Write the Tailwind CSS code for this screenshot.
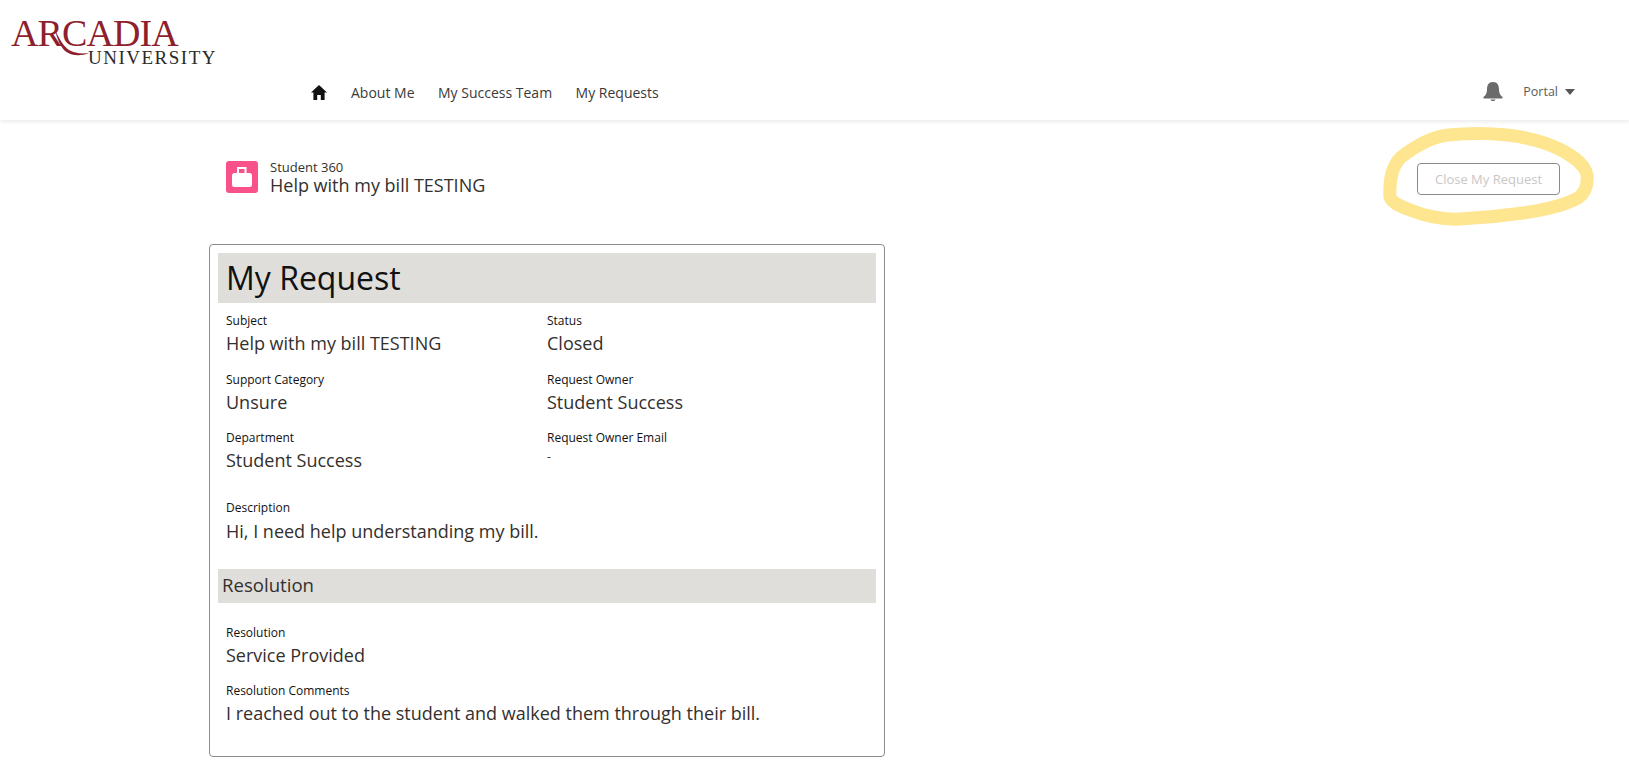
<!DOCTYPE html>
<html lang="en">
<head>
    <meta charset="UTF-8">
    <meta name="viewport" content="width=device-width, initial-scale=1.0">
    <title>My Request</title>
    <script src="https://cdn.jsdelivr.net/npm/@tailwindcss/browser@4"></script>
</head>
<body class="bg-white font-['Open_Sans',sans-serif] text-[#33302e] h-[773px] overflow-hidden relative">

    <!-- header -->
    <header class="h-[120px] bg-white shadow-[0_2px_4px_rgba(0,0,0,0.08)] pl-[11px] pr-[54px] pt-[18px]">
        <div class="relative w-[210px] h-[50px]">
            <span class="absolute left-0 top-0 font-['Liberation_Serif',serif] text-[38px] leading-[30px] tracking-[-0.9px] text-[#8e1f2d]">ARCADIA</span>
            <span class="absolute left-[77px] top-[30px] font-['Liberation_Serif',serif] text-[19px] leading-[20px] tracking-[1.5px] text-[#2a2a2a]">UNIVERSITY</span>
            <svg class="absolute left-[40px] top-[10px]" width="50" height="30" viewBox="0 0 50 30" fill="none"><path d="M4 2 C8 10 12 18 18 22 C23 25 30 26 38 25 C30 28.5 20 28 14 23 C9 18 6 10 4 2Z" fill="#8e1f2d"/></svg>
        </div>
        <div class="flex items-center h-[28px] mt-[10px] pl-[300px]">
            <svg class="w-[16px] h-[15px] mr-[24px]" viewBox="0 0 16 15" fill="#111"><path d="M8 0 L16 7.5 H13.6 V15 H9.8 V10 H6.2 V15 H2.4 V7.5 H0 Z"/></svg>
            <nav class="flex gap-[23.5px] text-[14px] text-[#3a3a3a]">
                <a>About Me</a>
                <a>My Success Team</a>
                <a>My Requests</a>
            </nav>
            <div class="ml-auto flex items-center">
                <svg class="w-[20px] h-[20px] mr-[20px]" viewBox="0 0 20 20" fill="#6b6b6b"><path d="M10 0 C14.5 0 16 3.5 16 7.5 C16 11 17 13 19.5 15 V16.5 H0.5 V15 C3 13 4 11 4 7.5 C4 3.5 5.5 0 10 0Z"/><path d="M7.5 17.5 H12.5 C12 19.5 8 19.5 7.5 17.5Z"/></svg>
                <span class="text-[12.5px] text-[#5c5c5c]">Portal</span>
                <svg class="w-[10px] h-[6px] ml-[7px]" viewBox="0 0 10 6" fill="#555"><path d="M0 0 H10 L5 6Z"/></svg>
            </div>
        </div>
    </header>

    <main class="pl-[209px]">
        <!-- page title -->
        <div class="flex justify-between pl-[17px] pr-[69px] pt-[41px] h-[124px]">
            <div class="flex items-start gap-[12px]">
                <div class="w-[32px] h-[32px] rounded-[3px] bg-[#f9528a]">
                    <svg width="32" height="32" viewBox="0 0 32 32" fill="#fff"><path d="M11 6 H20.5 V12 H18.5 V8 H13 V12 H11Z"/><rect x="6" y="12" width="20" height="14" rx="2.5"/></svg>
                </div>
                <div>
                    <div class="text-[13px] leading-[13px]">Student 360</div>
                    <div class="text-[18px] leading-[22px]">Help with my bill TESTING</div>
                </div>
            </div>
            <button class="self-start mt-[2px] pt-[1px] w-[143px] h-[32px] rounded-[4px] border border-[#8a8a8a] bg-white text-[13px] text-[#c9c7c5]">Close My Request</button>
        </div>

        <!-- request card -->
        <section class="w-[676px] h-[513px] border border-[#8c8c8c] rounded-[4px] p-[8px]">
            <h1 class="h-[50px] bg-[#dfdedb] pl-[8px] text-[32px] leading-[50px] text-[#111]">My Request</h1>
            <div class="grid grid-cols-[321px_1fr] pl-[8px] pt-[9px]">
                <div class="h-[58.5px]"><p class="text-[12px] leading-[18px] text-[#111]">Subject</p><p class="text-[18px] leading-[26px]">Help with my bill TESTING</p></div>
                <div class="h-[58.5px]"><p class="text-[12px] leading-[18px] text-[#111]">Status</p><p class="text-[18px] leading-[26px]">Closed</p></div>
                <div class="h-[58.5px]"><p class="text-[12px] leading-[18px] text-[#111]">Support Category</p><p class="text-[18px] leading-[26px]">Unsure</p></div>
                <div class="h-[58.5px]"><p class="text-[12px] leading-[18px] text-[#111]">Request Owner</p><p class="text-[18px] leading-[26px]">Student Success</p></div>
                <div class="h-[58.5px]"><p class="text-[12px] leading-[18px] text-[#111]">Department</p><p class="text-[18px] leading-[26px]">Student Success</p></div>
                <div class="h-[58.5px]"><p class="text-[12px] leading-[18px] text-[#111]">Request Owner Email</p><p class="text-[12px] leading-[20px]">-</p></div>
            </div>
            <div class="pl-[8px] pt-[11px]">
                <p class="text-[12px] leading-[18px] text-[#111]">Description</p>
                <p class="mt-[1px] text-[18px] leading-[26px]">Hi, I need help understanding my bill.</p>
            </div>
            <h2 class="mt-[25px] h-[34px] bg-[#dfdedb] pl-[4px] text-[18.6px] leading-[32px]">Resolution</h2>
            <div class="pl-[8px] pt-[21px]">
                <p class="text-[12px] leading-[18px] text-[#111]">Resolution</p>
                <p class="text-[18px] leading-[26px]">Service Provided</p>
                <p class="mt-[14px] text-[12px] leading-[18px] text-[#111]">Resolution Comments</p>
                <p class="text-[18px] leading-[26px]">I reached out to the student and walked them through their bill.</p>
            </div>
        </section>
    </main>

    <!-- yellow marker circle drawn over the page -->
    <svg class="absolute left-[1380px] top-[125px] pointer-events-none" width="220" height="105" viewBox="0 0 220 105" fill="none">
        <path d="M10 72 C9 55 12 42 20 33 C34 22 50 12 68 10 C88 8 108 8 127 10 C145 12 162 16 177 23 C192 30 205 40 207 50 C208 60 205 68 198 73 C185 80 165 85 143 88 C122 91 100 93 80 94 C60 95 45 91 30 85 C20 81 12 78 10 72Z" stroke="#fde68f" stroke-width="13" stroke-linejoin="round"/>
    </svg>

</body>
</html>
